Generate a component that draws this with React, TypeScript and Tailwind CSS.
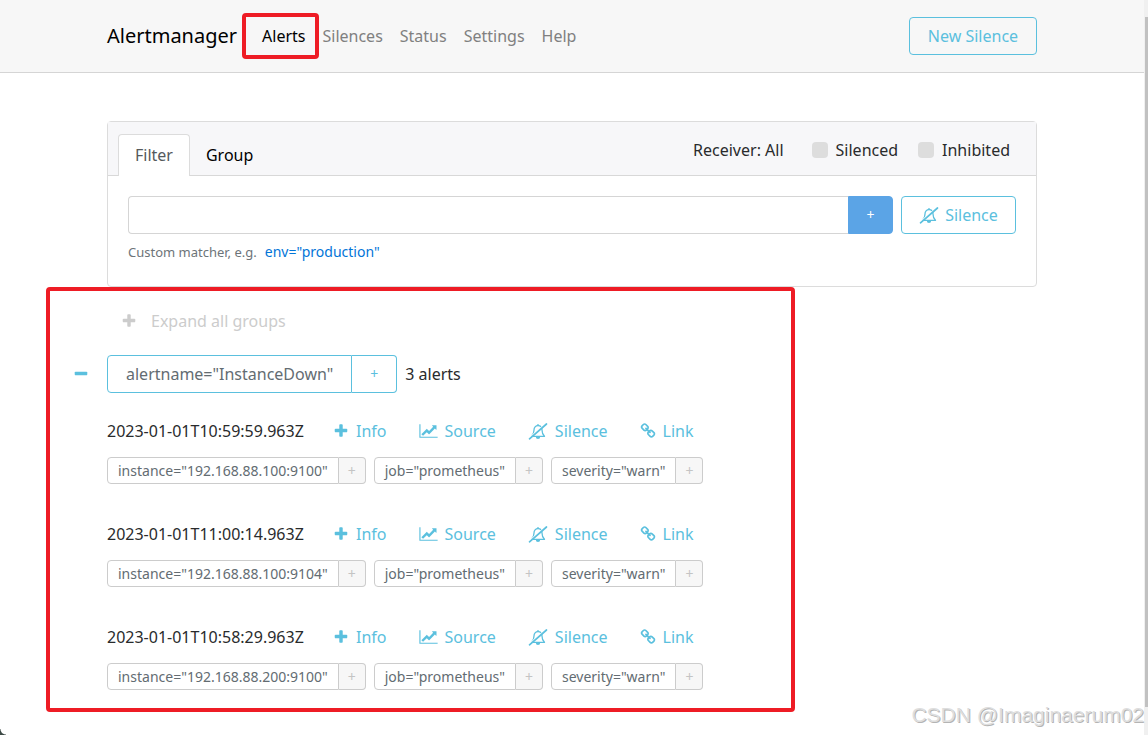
import type { ReactNode } from "react";

type IconProps = { className?: string };

function PlusIcon({ className = "h-4 w-4" }: IconProps) {
  return (
    <svg viewBox="0 0 1792 1792" fill="currentColor" aria-hidden="true" className={className}>
      <path d="M1600 736v192q0 40-28 68t-68 28h-416v416q0 40-28 68t-68 28h-192q-40 0-68-28t-28-68v-416h-416q-40 0-68-28t-28-68v-192q0-40 28-68t68-28h416v-416q0-40 28-68t68-28h192q40 0 68 28t28 68v416h416q40 0 68 28t28 68z" />
    </svg>
  );
}

function MinusIcon({ className = "h-4 w-4" }: IconProps) {
  return (
    <svg viewBox="0 0 1792 1792" fill="currentColor" aria-hidden="true" className={className}>
      <path d="M1600 736v192q0 40-28 68t-68 28h-1216q-40 0-68-28t-28-68v-192q0-40 28-68t68-28h1216q40 0 68 28t28 68z" />
    </svg>
  );
}

function ChartIcon() {
  return (
    <svg viewBox="0 0 2048 1792" fill="currentColor" aria-hidden="true" className="h-4 w-[19px]">
      <path d="M2048 1536v128h-2048v-1536h128v1408h1920zm-128-1248v435q0 21-19.5 29.5t-35.5-7.5l-121-121-633 633q-10 10-23 10t-23-10l-233-233-416 416-192-192 585-585q10-10 23-10t23 10l233 233 464-464-121-121q-16-16-7.5-35.5t29.5-19.5h435q14 0 23 9t9 23z" />
    </svg>
  );
}

function LinkIcon() {
  return (
    <svg viewBox="0 0 1792 1792" fill="currentColor" aria-hidden="true" className="h-4 w-4">
      <path d="M1520 1216q0-40-28-68l-208-208q-28-28-68-28-42 0-72 32 3 3 19 18.5t21.5 21.5 15 19 13 25.500 3.500 27.500q0 40-28 68t-68 28q-15 0-27.500-3.500t-25.500-13-19-15-21.500-21.500-18.500-19q-33 31-33 73 0 40 28 68l206 207q27 27 68 27 40 0 68-26l147-146q28-28 28-67zm-703-705q0-40-28-68l-206-207q-28-28-68-28-39 0-68 27l-147 146q-28 28-28 67 0 40 28 68l208 208q27 27 68 27 42 0 72-31-3-3-19-18.500t-21.500-21.500-15-19-13-25.500-3.500-27.500q0-40 28-68t68-28q15 0 27.500 3.500t25.500 13 19 15 21.500 21.500 18.500 19q33-31 33-73zm895 705q0 120-85 203l-147 146q-83 83-203 83-121 0-204-85l-206-207q-83-83-83-203 0-123 88-209l-88-88q-86 88-208 88-120 0-204-84l-208-208q-84-84-84-204t85-203l147-146q83-83 203-83 121 0 204 85l206 207q83 83 83 203 0 123-88 209l88 88q86-88 208-88 120 0 204 84l208 208q84 84 84 204z" />
    </svg>
  );
}

function BellSlashIcon() {
  return (
    <svg viewBox="0 0 20 18" fill="none" aria-hidden="true" className="h-[18px] w-5 shrink-0">
      <path
        d="M3.500 14.300c1.800-1.600 2.500-3.500 2.500-6.300 0-2.600 1.600-4.300 4-4.300s4 1.700 4 4.300c0 2.800.7 4.700 2.500 6.300z"
        stroke="currentColor"
        strokeWidth="1.300"
        strokeLinejoin="round"
      />
      <path d="M9.200 3.500v-.8a.8.8 0 0 1 1.600 0v.8zM7.800 14.800h4.400a2.200 2.200 0 0 1-4.400 0z" fill="currentColor" />
      <path d="M2 15.200 18.300 1" stroke="white" strokeWidth="1.200" />
      <path d="M1.500 16.800 18.500 2" stroke="currentColor" strokeWidth="1.700" strokeLinecap="round" />
    </svg>
  );
}

const navLinks = ["Silences", "Status", "Settings", "Help"];

const alerts = [
  { time: "2023-01-01T10:59:59.963Z", instance: "192.168.88.100:9100" },
  { time: "2023-01-01T11:00:14.963Z", instance: "192.168.88.100:9104" },
  { time: "2023-01-01T10:58:29.963Z", instance: "192.168.88.200:9100" },
];

function Header() {
  return (
    <header className="border-b border-[#d5d5d5] bg-[#f7f7f7]">
      <div className="mx-auto flex h-[72px] max-w-[930px] items-center">
        <a href="#/" className="text-xl text-black">Alertmanager</a>
        <nav className="flex items-center gap-[17px] text-[#808080]">
          <a href="#/alerts" className="relative ml-[25px] text-black">
            Alerts
            <span className="pointer-events-none absolute -top-[11px] -right-[14px] -bottom-[11px] -left-5 rounded-sm border-4 border-[#ee1c25]" />
          </a>
          {navLinks.map((name) => (
            <a key={name} href={"#/" + name.toLowerCase()}>{name}</a>
          ))}
        </nav>
        <button type="button" className="ml-auto h-[38px] w-32 rounded border border-[#5bc0de] text-[#5bc0de]">
          New Silence
        </button>
      </div>
    </header>
  );
}

function FilterCard() {
  return (
    <section className="rounded border border-[#dcdcdc]">
      <div className="flex h-[54px] justify-between border-b border-[#d8d8d8] bg-[#f7f7f9] px-2.5">
        <div className="mt-3 flex">
          <button type="button" className="-mb-px rounded-t border border-b-0 border-[#dcdcdc] bg-white px-4 pb-0.5 text-[#55595c]">
            Filter
          </button>
          <button type="button" className="px-4 text-black">Group</button>
        </div>
        <div className="flex h-14 items-center pr-4">
          <span className="mr-7">Receiver: All</span>
          <label className="mr-5 flex items-center gap-2">
            <input type="checkbox" className="h-4 w-4 appearance-none rounded bg-[#ddd]" />
            Silenced
          </label>
          <label className="flex items-center gap-2">
            <input type="checkbox" className="h-4 w-4 appearance-none rounded bg-[#ddd]" />
            Inhibited
          </label>
        </div>
      </div>
      <div className="px-5 pt-5 pb-6">
        <div className="flex h-[38px]">
          <input type="text" aria-label="Custom matcher" className="min-w-0 flex-1 rounded-l border border-r-0 border-[#d5d5d5] px-3" />
          <button type="button" aria-label="Add matcher" className="w-[45px] rounded-r border border-[#5ba4e6] bg-[#5ba4e6] text-sm text-white">
            +
          </button>
          <button type="button" className="ml-2 flex w-[115px] items-center justify-center gap-1.5 rounded border border-[#5bc0de] text-[#5bc0de]">
            <BellSlashIcon />
            Silence
          </button>
        </div>
        <p className="mt-2 flex items-baseline gap-2 text-[13px] leading-5 text-[#6d7479]">
          Custom matcher, e.g.
          <button type="button" className="text-sm leading-5 text-[#0275d8]">env="production"</button>
        </p>
      </div>
    </section>
  );
}

function Action({ icon, children }: { icon: ReactNode; children: ReactNode }) {
  return (
    <button type="button" className="flex items-center gap-[7px] text-[#5bc0de]">
      {icon}
      {children}
    </button>
  );
}

function Label({ children }: { children: ReactNode }) {
  return (
    <div className="flex h-[27px] text-sm">
      <button type="button" className="rounded-l border border-[#ccc] px-2.5 leading-6 text-[#636c72]">{children}</button>
      <button type="button" aria-label="Filter by label" className="w-[27px] rounded-r border border-l-0 border-[#ccc] bg-[#f7f7f7] text-[#c4c4c4]">
        +
      </button>
    </div>
  );
}

function AlertItem({ time, instance }: { time: string; instance: string }) {
  return (
    <li>
      <div className="flex h-6 items-center">
        <time className="w-[226px]">{time}</time>
        <div className="flex gap-8">
          <Action icon={<PlusIcon />}>Info</Action>
          <Action icon={<ChartIcon />}>Source</Action>
          <Action icon={<BellSlashIcon />}>Silence</Action>
          <Action icon={<LinkIcon />}>Link</Action>
        </div>
      </div>
      <div className="mt-3.5 flex gap-2">
        <Label>instance="{instance}"</Label>
        <Label>job="prometheus"</Label>
        <Label>severity="warn"</Label>
      </div>
    </li>
  );
}

function AlertGroups() {
  return (
    <section className="relative pt-[22px]">
      <div className="pointer-events-none absolute top-0 -left-[61px] h-[425px] w-[749px] rounded-sm border-4 border-[#ee1c25]" />
      <button type="button" className="ml-3.5 flex h-6 items-center gap-3.5 text-[#ccc]">
        <PlusIcon />
        Expand all groups
      </button>
      <div className="mt-[22px] -ml-[34px] flex items-center">
        <button type="button" aria-label="Collapse group" className="mr-[18px] text-[#5bc0de]">
          <MinusIcon />
        </button>
        <div className="flex h-[38px]">
          <button type="button" className="rounded-l border border-[#5bc0de] px-[18px] text-[#636c72]">alertname="InstanceDown"</button>
          <button type="button" aria-label="Filter by alertname" className="w-[45px] rounded-r border border-l-0 border-[#5bc0de] text-sm text-[#5bc0de]">
            +
          </button>
        </div>
        <span className="ml-2">3 alerts</span>
      </div>
      <ul className="mt-[26px] flex flex-col gap-[38px]">
        {alerts.map((alert) => (
          <AlertItem key={alert.time} {...alert} />
        ))}
      </ul>
    </section>
  );
}

export default function App() {
  return (
    <div className="relative flex h-screen overflow-hidden bg-white font-['Noto_Sans',sans-serif] text-base text-[#292b2c]">
      <div className="min-w-0 flex-1">
        <Header />
        <main className="mx-auto mt-12 max-w-[930px]">
          <FilterCard />
          <AlertGroups />
        </main>
      </div>
      <div className="w-1 bg-[#f0f0f0] pt-[17px] pb-7 pl-px">
        <div className="h-full bg-[#c1c1c1]" />
      </div>
      <div className="pointer-events-none absolute right-1 bottom-1.5 font-['Liberation_Sans',sans-serif] text-[21px] leading-7 text-[#dedede] [text-shadow:1px_1px_0_#b4b4b4]">
        CSDN @Imaginaerum02
      </div>
      <div className="pointer-events-none absolute bottom-0 left-0 h-1.5 w-1.5 bg-[radial-gradient(circle_at_top_right,transparent_5px,#3d4a46_6px)]" />
    </div>
  );
}
